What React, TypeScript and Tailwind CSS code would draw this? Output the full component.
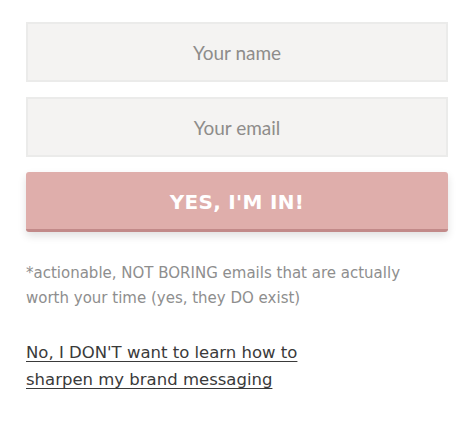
export default function App() {
  return (
    <div className="w-[474px] h-[434px] bg-white px-[26px] pt-[22px]">
      <div className="flex flex-col gap-[15px]">
        <input
          placeholder="Your name"
          className="h-[60px] w-full border-2 border-[#ebebea] bg-[#f4f3f2] text-center text-[19px] text-[#555] placeholder:text-[#8e8c8a] outline-none"
          style={{ fontFamily: "Lato, sans-serif" }}
        />
        <input
          placeholder="Your email"
          className="h-[60px] w-full border-2 border-[#ebebea] bg-[#f4f3f2] text-center text-[19px] text-[#555] placeholder:text-[#8e8c8a] outline-none"
          style={{ fontFamily: "Lato, sans-serif" }}
        />
        <button className="h-[60px] w-full rounded-[3px] border-b-[3px] border-[#c28a89] bg-[#dfaeab] pt-[3px] text-[20px] font-bold tracking-[0.3px] text-white shadow-[0_4px_8px_rgba(0,0,0,0.12)] font-['DejaVu_Sans',sans-serif]">
          YES, I'M IN!
        </button>
      </div>
      <p className="mt-[29px] text-[15px] leading-[25px] text-[#8e8e8e] font-['DejaVu_Sans',sans-serif]">
        *actionable, NOT BORING emails that are actually
        <br />
        worth your time (yes, they DO exist)
      </p>
      <a
        href="#"
        className="mt-[28px] block text-[16.5px] leading-[27px] text-[#3a3a3a] underline underline-offset-[3px] font-['DejaVu_Sans',sans-serif]"
      >
        No, I DON'T want to learn how to
        <br />
        sharpen my brand messaging
      </a>
    </div>
  );
}
